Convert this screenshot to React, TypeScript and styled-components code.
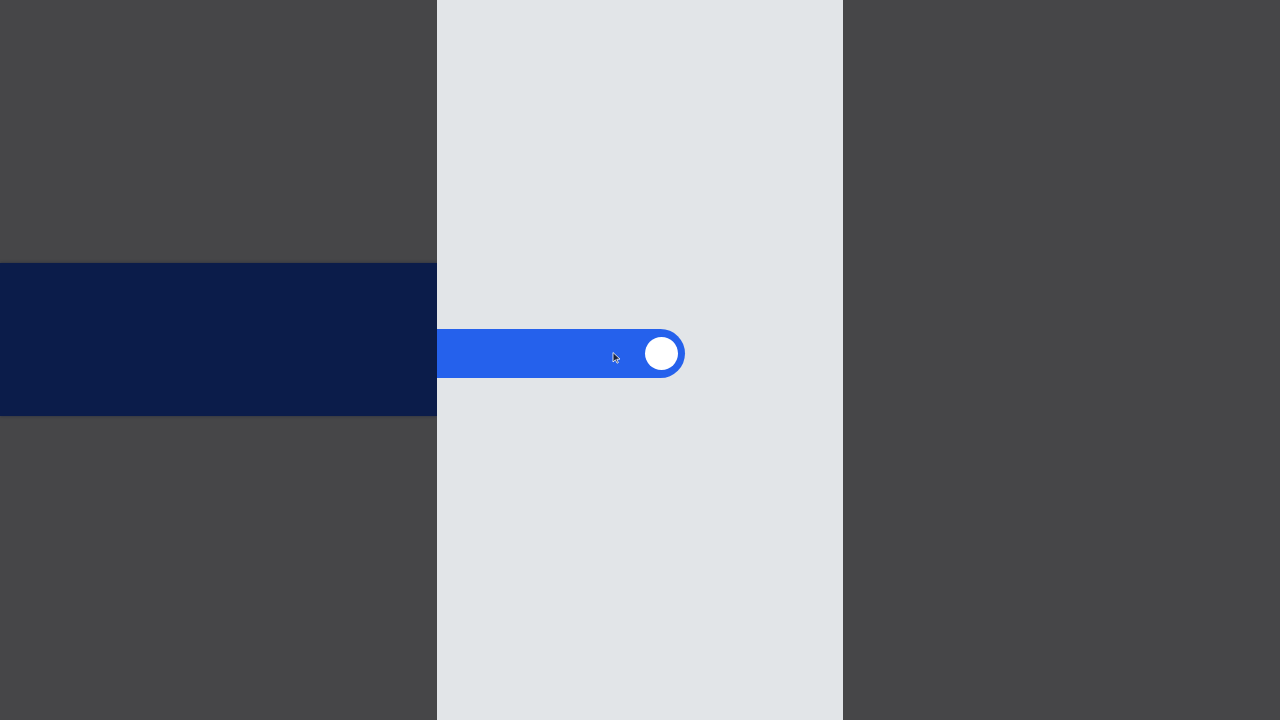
import styled, { createGlobalStyle } from 'styled-components';

const GlobalStyle = createGlobalStyle`
  html, body {
    margin: 0;
    padding: 0;
    background: #464648;
    font-family: "Liberation Sans", Arial, sans-serif;
  }
`;

const Stage = styled.div`
  width: 1280px;
  height: 720px;
  overflow: hidden;
  display: grid;
  grid-template-columns: 437px 406px 1fr;
  background: #464648;
`;

const SideColumn = styled.div`
  display: flex;
  flex-direction: column;
  padding-top: 263px;
`;

const Band = styled.div`
  height: 153px;
  background: #0b1c4a;
  box-shadow: 0 0 3px rgba(20, 30, 60, 0.6);
`;

const Panel = styled.div`
  background: #e2e5e8;
  display: flex;
  flex-direction: column;
  align-items: flex-start;
  padding-top: 329px;
`;

const Toggle = styled.div`
  position: relative;
  width: 248px;
  height: 49px;
  box-sizing: border-box;
  background: #2561ec;
  border-radius: 0 25px 25px 0;
  display: flex;
  align-items: center;
  justify-content: flex-end;
  padding-right: 7px;
`;

const Knob = styled.div`
  width: 33px;
  height: 33px;
  border-radius: 50%;
  background: #ffffff;
`;

const Pointer = styled.svg`
  position: absolute;
  left: 175px;
  top: 23px;
`;

const App = () => {
  return (
    <>
      <GlobalStyle />
      <Stage>
        <SideColumn>
          <Band />
        </SideColumn>
        <Panel>
          <Toggle>
            <Pointer width="9" height="12" viewBox="0 0 9 12">
              <path d="M1 0.5 L1 10 L3.4 7.8 L5 11.2 L6.4 10.6 L4.8 7.3 L8 7.1 Z" fill="#1a2440" stroke="#ffffff" strokeWidth="0.8" />
            </Pointer>
            <Knob />
          </Toggle>
        </Panel>
        <div />
      </Stage>
    </>
  );
};

export default App;
